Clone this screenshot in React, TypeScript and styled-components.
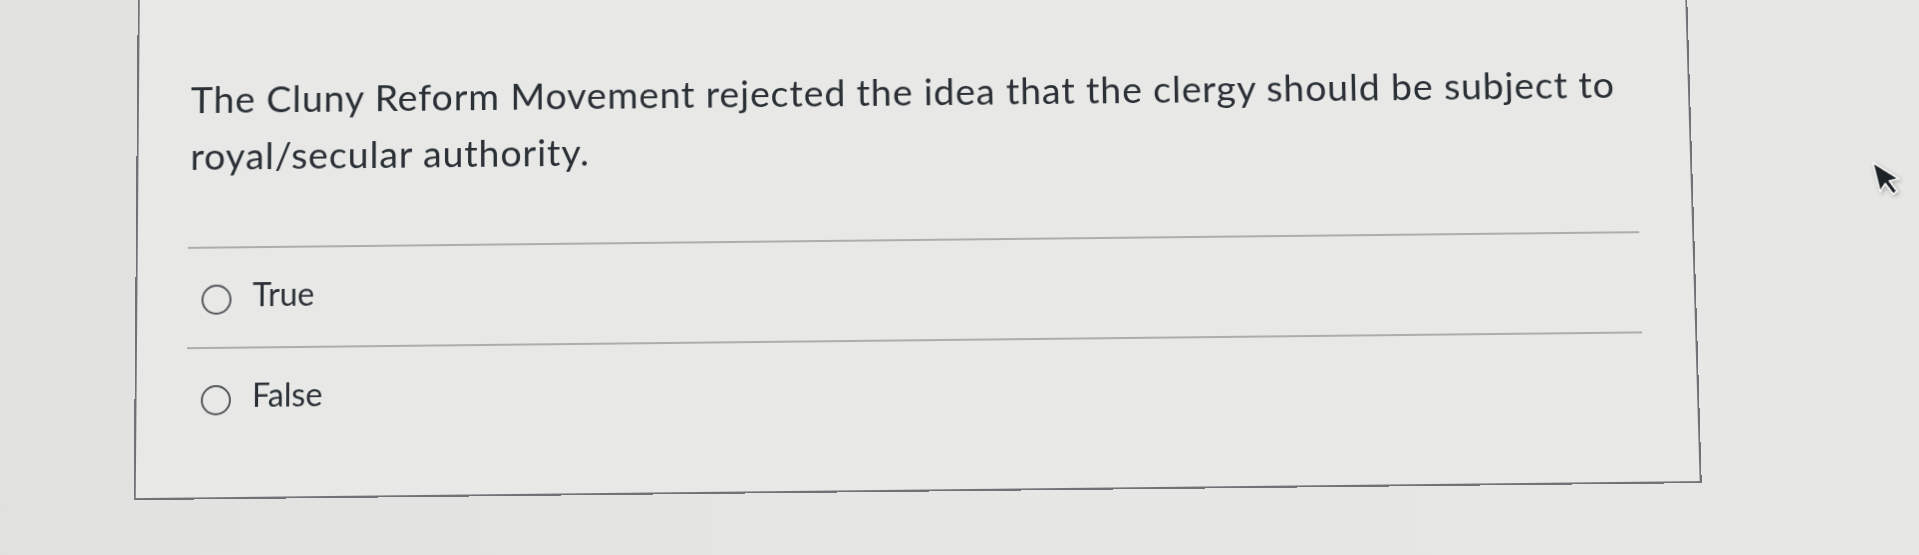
import React from 'react';
import styled, { createGlobalStyle } from 'styled-components';

const GlobalStyle = createGlobalStyle`
  html, body {
    margin: 0;
    padding: 0;
  }
  body {
    background: #e4e4e2;
    font-family: Lato, "Noto Sans", sans-serif;
    overflow: hidden;
  }
`;

const Page = styled.div`
  position: relative;
  height: 555px;
  padding-left: 136px;
  overflow: hidden;
  background: linear-gradient(90deg, #e1e1df 0%, #e6e6e4 45%, #e7e7e5 100%);
`;

const Card = styled.section`
  box-sizing: border-box;
  width: 1558px;
  margin-top: -40px;
  padding: 102px 53px 49px 50px;
  border: 2px solid #6f7376;
  border-top: none;
  background: #e8e8e6;
  transform: perspective(1000px) rotateX(1.4deg) rotate(-0.62deg);
`;

const Question = styled.p`
  margin: 0 0 63px;
  padding-left: 2px;
  font-size: 37.5px;
  line-height: 57px;
  letter-spacing: 0.9px;
  color: #2a3036;
`;

const Options = styled.div`
  display: flex;
  flex-direction: column;
`;

const Option = styled.label`
  display: flex;
  align-items: flex-start;
  padding: 26px 0 32px 14px;
  border-top: 2px solid #acaead;
  cursor: pointer;
`;

const Radio = styled.span`
  box-sizing: border-box;
  flex: none;
  width: 30px;
  height: 30px;
  margin-top: 10px;
  border: 2px solid #54595d;
  border-radius: 50%;
`;

const Label = styled.span`
  margin-left: 21px;
  font-size: 32px;
  line-height: 40px;
  color: #2a3036;
`;

const Pointer = styled.svg`
  position: absolute;
  left: 1871px;
  top: 161px;
  width: 26px;
  height: 41px;
  transform: rotate(-14deg);
  transform-origin: 1px 1px;
  filter: drop-shadow(1px 2px 2px rgba(0, 0, 0, 0.25));
`;

const answers = ['True', 'False'];

export default function App() {
  return (
    <>
      <GlobalStyle />
      <Page>
        <Card>
          <Question>
            The Cluny Reform Movement rejected the idea that the clergy should be subject to
            royal/secular authority.
          </Question>
          <Options>
            {answers.map((a) => (
              <Option key={a}>
                <Radio />
                <Label>{a}</Label>
              </Option>
            ))}
          </Options>
        </Card>
        <Pointer viewBox="0 0 17 27">
          <path
            d="M1 1 L1 21 L5.6 16.6 L9 24.6 L12 23.3 L8.7 15.6 L15 15.6 Z"
            fill="#1c2226"
            stroke="#f4f4f2"
            strokeWidth="1.2"
            strokeLinejoin="round"
          />
        </Pointer>
      </Page>
    </>
  );
}
